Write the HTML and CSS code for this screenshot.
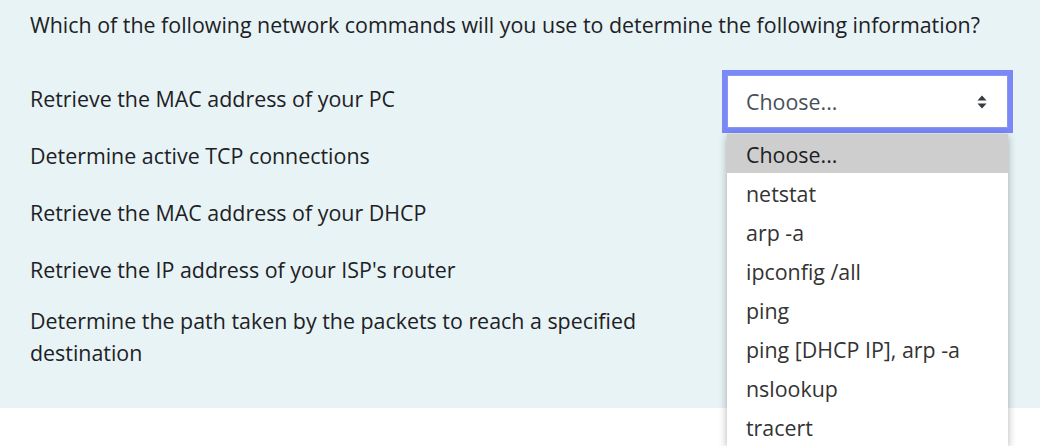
FILE: index.html
```html
<!DOCTYPE html>
<html lang="en">
<head>
    <meta charset="UTF-8">
    <title>Matching question</title>
    <link rel="stylesheet" href="styles.css">
</head>
<body>
    <div class="que">
        <p class="qtext">Which of the following network commands will you use to determine the following information?</p>

        <div class="answers">
            <div class="row">
                <div class="text">Retrieve the MAC address of your PC</div>
                <div class="control">
                    <div class="select focused">
                        <span>Choose...</span>
                        <svg class="arrows" width="10" height="14" viewBox="0 0 10 14">
                            <path d="M5 0.5 L9.5 5.5 H0.5 Z M5 13.5 L9.5 8.5 H0.5 Z" fill="#343a40"/>
                        </svg>
                    </div>
                    <ul class="options">
                        <li class="active">Choose...</li>
                        <li>netstat</li>
                        <li>arp -a</li>
                        <li>ipconfig /all</li>
                        <li>ping</li>
                        <li>ping [DHCP IP], arp -a</li>
                        <li>nslookup</li>
                        <li>tracert</li>
                    </ul>
                </div>
            </div>
            <div class="row">
                <div class="text">Determine active TCP connections</div>
            </div>
            <div class="row">
                <div class="text">Retrieve the MAC address of your DHCP</div>
            </div>
            <div class="row">
                <div class="text">Retrieve the IP address of your ISP's router</div>
            </div>
            <div class="row long">
                <div class="text">Determine the path taken by the packets to reach a specified destination</div>
            </div>
        </div>
    </div>
</body>
</html>
```

FILE: styles.css
```css
html, body {
    height: 446px;
}
body {
    margin: 0;
    font-family: 'Open Sans', 'Noto Sans', sans-serif;
    font-size: 21.4px;
    color: #1d2125;
    background: #fff;
}
.que {
    width: 1040px;
    background: #e7f3f5;
    padding: 11px 0 39px 30px;
    box-sizing: border-box;
}
.qtext {
    margin: 0 0 44px 0;
    line-height: 28px;
}
.answers {
    display: flex;
    flex-direction: column;
}
.row {
    display: flex;
    align-items: flex-start;
    min-height: 57px;
}
.row.long {
    margin-top: -6px;
}
.row .text {
    width: 640px;
    line-height: 32px;
}
.control {
    position: relative;
    margin-left: 57px;
}
.select {
    width: 281px;
    height: 53px;
    box-sizing: border-box;
    background: #fff;
    border: 1px solid #8f959e;
    display: flex;
    align-items: center;
    justify-content: space-between;
    padding: 0 20px 0 18px;
    color: #495057;
    margin-top: -8px;
}
.select.focused {
    border-color: #8b96f3;
    box-shadow: 0 0 0 5px #7a88f8;
}
.options {
    position: absolute;
    left: 0;
    top: 51px;
    width: 281px;
    margin: 0;
    padding: 0;
    list-style: none;
    background: #fff;
    box-shadow: 0 2px 8px rgba(0,0,0,0.3);
    z-index: 2;
}
.options li {
    height: 39px;
    line-height: 41px;
    padding-left: 19px;
    color: #333;
    overflow: hidden;
}
.options li.active {
    background: #cecece;
    color: #1d2125;
}
```
